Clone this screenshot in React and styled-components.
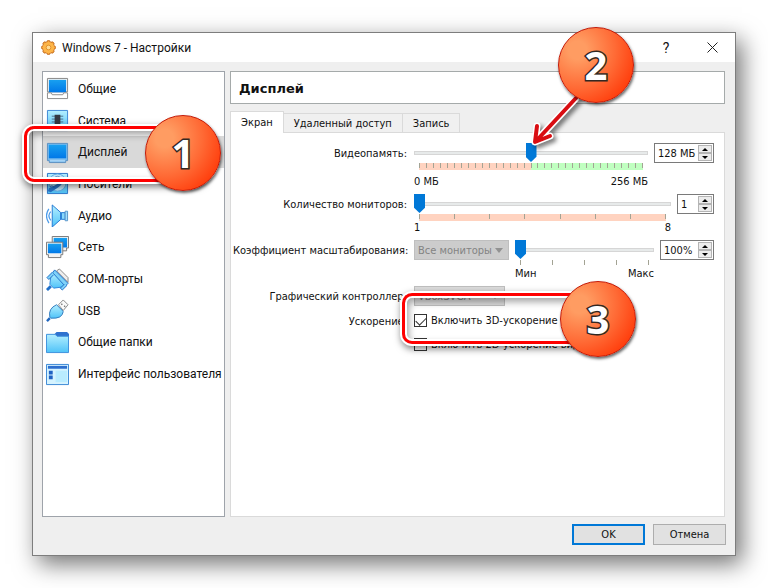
import { useState } from "react";
import styled, { createGlobalStyle } from "styled-components";

const GlobalStyle = createGlobalStyle`
    * { box-sizing: border-box; }
    body {
        margin: 0;
        background: #fff;
        color: #111;
        font-family: "DejaVu Sans Condensed", "DejaVu Sans", sans-serif;
        font-size: 11px;
    }
    button, input, select { font: inherit; color: inherit; margin: 0; }
`

// sidebar icons, all on a 24x24 grid
const GeneralIcon = () => (
    <Icon viewBox="0 0 24 24">
        <path d="M1.5 1.5h21v14h-21z" fill="#f4f4f4" stroke="#858585" />
        <path d="M3 3h18v13H3z" fill="url(#screen)" />
        <path d="M1.5 16.5h4l1 2h11l1-2h4v6h-21z" fill="#fff" stroke="#8a8a8a" />
    </Icon>
)
const SystemIcon = () => (
    <Icon viewBox="0 0 24 24">
        <path d="M1.5 1.5h21v21h-21z" fill="url(#sky)" stroke="#3c86d6" />
        <path d="M6 7.5h12M6 10.5h12M6 13.5h12M6 16.5h12" stroke="#4c6f8c" />
        <path d="M9 6h6v13H9z" fill="#343a44" />
    </Icon>
)
const DisplayIcon = () => (
    <Icon viewBox="0 0 24 24">
        <path d="M1.5 2.5h21v18h-2v2h-17v-2h-2z" fill="#73b9ee" stroke="#5b8fc0" />
        <path d="M3 4h18v14H3z" fill="url(#screen)" />
        <path d="M4 20.500h16" stroke="#a5d2f5" strokeWidth="2" />
    </Icon>
)
const StorageIcon = () => (
    <Icon viewBox="0 0 24 24">
        <path d="M1.5 1.5h21v21h-21z" fill="url(#sky)" stroke="#2b74c9" />
        <circle cx="12" cy="11" r="9" fill="#c3e8fb" stroke="#5aa9e6" />
        <circle cx="12" cy="8" r="3.500" fill="#e6f6ff" stroke="#5a93c8" />
        <path d="M16 5q4 6-3 11l-8 5-3-1 1-3 6-3q6-2 7-9z" fill="#2a74c8" />
        <path d="M4 15q3-2 5 2" fill="none" stroke="#1c62bd" />
    </Icon>
)
const AudioIcon = () => (
    <Icon viewBox="0 0 24 24">
        <path d="M5 8q-4 4 0 9M3 5q-5 7 0 15" fill="none" stroke="#4b9bea" strokeWidth="1.3" />
        <path d="M6.5 1v23l9-8V9z" fill="url(#sky)" stroke="#1f77d3" strokeLinejoin="round" />
        <path d="M15.5 9v7M16 9h4v7h-4z" fill="#8ad9fb" stroke="#1f77d3" />
        <path d="M20 7.5h2.500v10H20z" fill="#9fe0ff" stroke="#5a93c8" />
    </Icon>
)
const NetworkIcon = () => (
    <Icon viewBox="0 0 24 24">
        <path d="M6.5.5h17v12h-2v3h-15z" fill="#f2f2f2" stroke="#777" />
        <path d="M8 2h14v10H8z" fill="url(#screen)" />
        <path d="M.5 6.5h17v13h-2v3h-13v-3h-2z" fill="#f2f2f2" stroke="#777" />
        <path d="M2 8h14v10H2z" fill="url(#screen)" />
    </Icon>
)
const SerialIcon = () => (
    <Icon viewBox="0 0 24 24">
        <path d="M11 3l3-2 9 9v5z" fill="#eee" stroke="#888" />
        <path d="M8 5l12 12-4 3-8 1-4-4 1-8z" fill="url(#sky)" stroke="#2f86dc" />
        <path d="M7 5l2-3 14 14-3 3z" fill="#7fd2f8" stroke="#1f6fc9" />
        <path d="M7 4l-6 6 2 2 5-5M19 17l-4 4 2 2 5-5" fill="#7fd2f8" stroke="#1f6fc9" />
        <path d="M5 19l-4 4" stroke="#1f6fc9" strokeWidth="3" />
    </Icon>
)
const UsbIcon = () => (
    <Icon viewBox="0 0 24 24">
        <path d="M13 6l5-5 5 5-5 6z" fill="#fafafa" stroke="#888" />
        <path d="M16 5l1 1M19 7l1 1" stroke="#777" strokeWidth="1.500" />
        <path d="M11 6l7 7q-1 8-13 7l-1-1Q2 10 11 6z" fill="url(#sky)" stroke="#2f79bd" />
        <path d="M4 20l-3 3" stroke="#1f66bf" strokeWidth="2.500" />
    </Icon>
)
const FolderIcon = () => (
    <Icon viewBox="0 0 24 24">
        <path d="M9 3l2-2h11l2 2v4H9z" fill="#2f72cf" />
        <path d="M.5 3.5h9l2 2h12v17H.5z" fill="url(#sky)" stroke="#3c8fdc" />
    </Icon>
)
const InterfaceIcon = () => (
    <Icon viewBox="0 0 24 24">
        <path d="M.5 1.5h23v21H.5z" fill="#d5f3ff" stroke="#3886d4" />
        <path d="M2 3h20v3H2z" fill="#2d6fce" />
        <path d="M3 8h4v4H3zM3 13h4v4H3z" fill="#1f62c4" />
        <path d="M10 8h12v12H10z" fill="#b9ecff" />
    </Icon>
)

const sections = [
    { title: "Общие", icon: GeneralIcon },
    { title: "Система", icon: SystemIcon },
    { title: "Дисплей", icon: DisplayIcon },
    { title: "Носители", icon: StorageIcon },
    { title: "Аудио", icon: AudioIcon },
    { title: "Сеть", icon: NetworkIcon },
    { title: "COM-порты", icon: SerialIcon },
    { title: "USB", icon: UsbIcon },
    { title: "Общие папки", icon: FolderIcon },
    { title: "Интерфейс пользователя", icon: InterfaceIcon },
]

const tabs = ["Экран", "Удаленный доступ", "Запись"]

const Gradients = () => (
    <HiddenSvg aria-hidden="true">
        <defs>
            <linearGradient id="screen" x1="0" y1="0" x2="0" y2="1">
                <stop offset="0" stopColor="#18a0f0" />
                <stop offset="1" stopColor="#0078e8" />
            </linearGradient>
            <linearGradient id="sky" x1="0" y1="0" x2="0" y2="1">
                <stop offset="0" stopColor="#b5efff" />
                <stop offset="1" stopColor="#4fc3f8" />
            </linearGradient>
        </defs>
    </HiddenSvg>
)

const GearIcon = () => (
    <Gear viewBox="0 0 16 16">
        <g fill="#f2a23a" stroke="#c46a1c">
            {[0, 45, 90, 135, 180, 225, 270, 315].map((a) => (
                <circle key={a} cx="8" cy="2.5" r="2" transform={`rotate(${a} 8 8)`} />
            ))}
        </g>
        <circle cx="8" cy="8" r="6" fill="#fdb548" />
        <circle cx="8" cy="8" r="2.5" fill="#ffdc94" stroke="#e0902e" />
    </Gear>
)

const Scale = ({ id, label, max, min = 0, start, ticks, from, to, tint, spaced }) => {
    const [value, setValue] = useState(start);
    return (
        <ScaleBox>
            <Range
                id={id}
                type="range"
                aria-label={label}
                min={min}
                max={max}
                value={value}
                onChange={(e) => setValue(e.target.value)}
            />
            <Ticks $tint={tint}>
                {Array.from({ length: ticks }, (_, i) => <Tick key={i} />)}
            </Ticks>
            <Ends $spaced={spaced}>
                <span>{from}</span>
                <span>{to}</span>
            </Ends>
        </ScaleBox>
    )
}

const SpinBox = ({ label, text, width }) => (
    <Spin $width={width}>
        <SpinInput aria-label={label} defaultValue={text} />
        <SpinButtons>
            <SpinButton aria-label="Больше"><svg width="6" height="3"><path d="M0 3l3-3 3 3z" /></svg></SpinButton>
            <SpinButton aria-label="Меньше"><svg width="6" height="3"><path d="M0 0l3 3 3-3z" /></svg></SpinButton>
        </SpinButtons>
    </Spin>
)

const Combo = ({ id, text, width, light }) => (
    <ComboBox $width={width} $light={light}>
        <Select id={id} disabled>
            <option>{text}</option>
        </Select>
        <svg width="8" height="5"><path d="M0 0h8L4 5z" fill="#929292" /></svg>
    </ComboBox>
)

export default function App() {
    const [section, setSection] = useState("Дисплей");
    const [tab, setTab] = useState("Экран");

    return (
        <Page>
            <GlobalStyle />
            <Gradients />
            <Dialog>
                <TitleBar>
                    <GearIcon />
                    <Title>Windows 7 - Настройки</Title>
                    <TitleButton aria-label="Справка">?</TitleButton>
                    <TitleButton aria-label="Закрыть">
                        <svg width="11" height="11"><path d="M.5.5l10 10M10.5.5l-10 10" stroke="#222" /></svg>
                    </TitleButton>
                </TitleBar>
                <Content>
                    <Sidebar>
                        <SectionList>
                            {sections.map(({ title, icon: SectionIcon }) => (
                                <SectionItem key={title}>
                                    <SectionButton $active={title === section} onClick={() => setSection(title)}>
                                        <SectionIcon />
                                        {title}
                                    </SectionButton>
                                </SectionItem>
                            ))}
                        </SectionList>
                    </Sidebar>
                    <Main>
                        <Heading>{section}</Heading>
                        <TabBar role="tablist">
                            {tabs.map((name) => (
                                <Tab key={name} role="tab" $active={name === tab} onClick={() => setTab(name)}>{name}</Tab>
                            ))}
                        </TabBar>
                        <Panel>
                            <Label htmlFor="memory">Видеопамять:</Label>
                            <Controls>
                                <Scale
                                    id="memory"
                                    max={256}
                                    start={128}
                                    ticks={33}
                                    from="0 МБ"
                                    to="256 МБ"
                                    tint="linear-gradient(90deg, #ffd3c0 50%, #c0ffc0 50%)"
                                    spaced
                                />
                                <SpinBox label="Видеопамять, МБ" text="128 МБ" width={60} />
                            </Controls>

                            <Label htmlFor="monitors">Количество мониторов:</Label>
                            <Controls>
                                <Scale id="monitors" min={1} max={8} start={1} ticks={8} from="1" to="8" tint="#ffd3c0" />
                                <SpinBox label="Количество мониторов" text="1" width={37} />
                            </Controls>

                            <Label htmlFor="factor">Коэффициент масштабирования:</Label>
                            <Controls>
                                <Combo id="factor" text="Все мониторы" width={95} />
                                <Scale label="Масштаб" min={100} max={200} start={100} ticks={5} from="Мин" to="Макс" tint="none" />
                                <SpinBox label="Масштаб, %" text="100%" width={54} />
                            </Controls>

                            <Label htmlFor="controller">Графический контроллер:</Label>
                            <Controls>
                                <Combo id="controller" text="VBoxSVGA" width={91} light />
                            </Controls>

                            <Label as="span">Ускорение:</Label>
                            <CheckLabel>
                                <Check type="checkbox" defaultChecked />
                                Включить 3D-ускорение
                            </CheckLabel>
                            <CheckLabel>
                                <Check type="checkbox" />
                                Включить 2D-ускорение видео
                            </CheckLabel>
                        </Panel>
                    </Main>
                </Content>
                <Footer>
                    <FooterButton $primary>OK</FooterButton>
                    <FooterButton>Отмена</FooterButton>
                </Footer>

                {/* numbered steps over the dialog */}
                <Frame $left={-9} $top={93} $width={180} $height={56} />
                <Frame $left={369} $top={260} $width={180} $height={51} />
                <Arrow width="60" height="64" viewBox="0 0 60 64">
                    <g fill="none" strokeLinecap="round" strokeLinejoin="round">
                        <path d="M50 8L12 49M11 36L9 52l15-6" stroke="#fff" strokeWidth="7" />
                        <path d="M50 8L12 49M11 36L9 52l15-6" stroke="#d90d12" strokeWidth="4" />
                    </g>
                </Arrow>
                <Badge $left={112} $top={82}>1</Badge>
                <Badge $left={525} $top={-6}>2</Badge>
                <Badge $left={527} $top={248}>3</Badge>
            </Dialog>
        </Page>
    )
}

const Page = styled.div`
    display: flex;
    flex-direction: column;
    min-height: 100vh;
    padding: 32px;
`
const HiddenSvg = styled.svg`
    position: absolute;
    width: 0;
    height: 0;
`
const Dialog = styled.div`
    position: relative;
    flex: 1;
    display: flex;
    flex-direction: column;
    border: 1px solid #7d7d7d;
    background: #efefef;
    box-shadow: 6px 8px 22px rgba(0, 0, 0, 0.55);
`
const TitleBar = styled.header`
    display: flex;
    align-items: center;
    height: 29px;
    padding-left: 8px;
    background: #fff;
    font-family: Roboto, "Noto Sans", sans-serif;
    font-size: 12px;
`
const Gear = styled.svg`
    width: 15px;
    height: 15px;
`
const Title = styled.span`
    flex: 1;
    padding-left: 6px;
`
const TitleButton = styled.button`
    display: flex;
    justify-content: center;
    align-items: center;
    width: 46px;
    height: 29px;
    padding: 0;
    border: 0;
    background: none;
    font-size: 14px;
`
const Content = styled.div`
    flex: 1;
    display: flex;
    gap: 5px;
    padding: 9px 10px 7px 9px;
`
const Sidebar = styled.nav`
    width: 183px;
    padding: 1px 0;
    border: 1px solid #9ea3aa;
    background: #fff;
    font-family: Roboto, "Noto Sans", sans-serif;
    font-size: 12px;
`
const SectionList = styled.ul`
    display: grid;
    grid-template-columns: minmax(0, 1fr);
    grid-auto-rows: 1fr;
    height: 317px;
    margin: 0;
    padding: 0;
    list-style: none;
`
const SectionItem = styled.li`
    display: flex;
`
const SectionButton = styled.button`
    flex: 1;
    min-width: 0;
    display: flex;
    align-items: center;
    gap: 9px;
    padding: 0 0 0 3px;
    border: 0;
    background: ${(props) => (props.$active ? "#d9d9d9" : "none")};
    white-space: nowrap;
`
const Icon = styled.svg`
    flex: none;
    width: 23px;
    height: 23px;
`
const Main = styled.main`
    flex: 1;
    min-width: 0;
    display: flex;
    flex-direction: column;
`
const Heading = styled.h1`
    height: 33px;
    margin: 0 0 7px;
    padding-left: 8px;
    border: 1px solid #a5aaaa;
    background: #fff;
    font-family: "DejaVu Sans", sans-serif;
    font-size: 13px;
    font-weight: bold;
    line-height: 34px;
`
const TabBar = styled.div`
    display: flex;
    align-items: flex-end;
    height: 21px;
`
const Tab = styled.button`
    height: ${(props) => (props.$active ? 22 : 19)}px;
    margin-bottom: ${(props) => (props.$active ? -1 : 0)}px;
    padding: 0 10px;
    border: 1px solid #dadada;
    border-bottom: 0;
    background: ${(props) => (props.$active ? "#fff" : "#f0f0f0")};
    z-index: ${(props) => (props.$active ? 1 : 0)};
    & + & { border-left: 0; }
`
const Panel = styled.section`
    flex: 1;
    display: grid;
    grid-template-columns: 174px 1fr;
    align-content: start;
    gap: 5px 7px;
    padding: 10px 10px 10px 2px;
    border: 1px solid #dadada;
    background: #fff;
`
const Label = styled.label`
    height: 19px;
    line-height: 21px;
    text-align: right;
    white-space: nowrap;
`
const Controls = styled.div`
    display: flex;
    align-items: flex-start;
    gap: 6px;
`
const ScaleBox = styled.div`
    flex: 1;
    min-width: 0;
    display: flex;
    flex-direction: column;
`
const Range = styled.input`
    appearance: none;
    width: 100%;
    height: 20px;
    background: none;

    &::-webkit-slider-runnable-track {
        height: 4px;
        background: #e7eaea;
        box-shadow: inset 0 0 0 1px #d6d6d6;
    }
    &::-webkit-slider-thumb {
        appearance: none;
        width: 11px;
        height: 19px;
        margin-top: -8px;
        background: #0078d7;
        clip-path: polygon(0 0, 100% 0, 100% 72%, 50% 100%, 0 72%);
    }
`
const Ticks = styled.div`
    display: flex;
    justify-content: space-between;
    height: 7px;
    margin: 0 5px;
    background: ${(props) => props.$tint};
`
const Tick = styled.span`
    width: 1px;
    height: 5px;
    background: #a3a394;
`
const Ends = styled.div`
    display: flex;
    justify-content: space-between;
    margin-top: ${(props) => (props.$spaced ? 5 : 0)}px;
    line-height: 14px;
`
const Spin = styled.div`
    display: flex;
    width: ${(props) => props.$width}px;
    height: 20px;
    border: 1px solid #7a7a7a;
    background: #fff;
`
const SpinInput = styled.input`
    flex: 1;
    min-width: 0;
    padding: 0 0 0 3px;
    border: 0;
    background: none;
`
const SpinButtons = styled.div`
    display: flex;
    flex-direction: column;
    width: 15px;
    padding: 1px 1px 1px 0;
`
const SpinButton = styled.button`
    flex: 1;
    display: flex;
    justify-content: center;
    align-items: center;
    padding: 0;
    border: 1px solid #b4b4b4;
    background: #ececec;
`
const ComboBox = styled.div`
    display: flex;
    align-items: center;
    width: ${(props) => props.$width}px;
    height: 20px;
    padding-right: 5px;
    border: 1px solid #bfbfbf;
    background: ${(props) => (props.$light ? "#dcdcdc" : "#ccc")};
`
const Select = styled.select`
    flex: 1;
    min-width: 0;
    appearance: none;
    padding: 0 0 0 3px;
    border: 0;
    background: none;
    color: #838383;
    opacity: 1;
`
const CheckLabel = styled.label`
    grid-column: 2;
    display: flex;
    align-items: center;
    gap: 4px;
    height: 18px;
`
const Check = styled.input`
    appearance: none;
    width: 13px;
    height: 13px;
    border: 1px solid #333;
    background: #fff;

    &:checked::before {
        content: "";
        display: block;
        width: 9px;
        height: 5px;
        margin: 2px 1px;
        border: solid #333;
        border-width: 0 0 1px 1px;
        transform: rotate(-45deg);
    }
`
const Footer = styled.footer`
    display: flex;
    justify-content: flex-end;
    gap: 8px;
    padding: 0 9px 10px;
`
const FooterButton = styled.button`
    width: 73px;
    height: 21px;
    padding: 0;
    border: ${(props) => (props.$primary ? "2px solid #0078d7" : "1px solid #adadad")};
    background: #e1e1e1;
`
const Frame = styled.div`
    position: absolute;
    left: ${(props) => props.$left}px;
    top: ${(props) => props.$top}px;
    width: ${(props) => props.$width}px;
    height: ${(props) => props.$height}px;
    border: 3px solid #f00;
    border-radius: 10px;
    box-shadow: 0 0 0 2px #fff, inset 0 0 0 2px #fff, 1px 3px 7px 2px rgba(0, 0, 0, 0.5), inset 2px 4px 7px 2px rgba(0, 0, 0, 0.35);
`
const Arrow = styled.svg`
    position: absolute;
    left: 493px;
    top: 57px;
    filter: drop-shadow(3px 3px 2px rgba(0, 0, 0, 0.5));
`
const Badge = styled.div`
    position: absolute;
    left: ${(props) => props.$left}px;
    top: ${(props) => props.$top}px;
    width: 76px;
    height: 76px;
    border: 1px solid #c41a08;
    border-radius: 50%;
    background: radial-gradient(circle at 25% 30%, #ff9c62 0 12%, #ff6a35 50%, #ff3000 90%);
    box-shadow: 1px 2px 3px rgba(0, 0, 0, 0.6);
    color: #fff;
    font: bold 40px/74px "Noto Sans", sans-serif;
    text-align: center;
    -webkit-text-stroke: 3px #332822;
    paint-order: stroke fill;
`
